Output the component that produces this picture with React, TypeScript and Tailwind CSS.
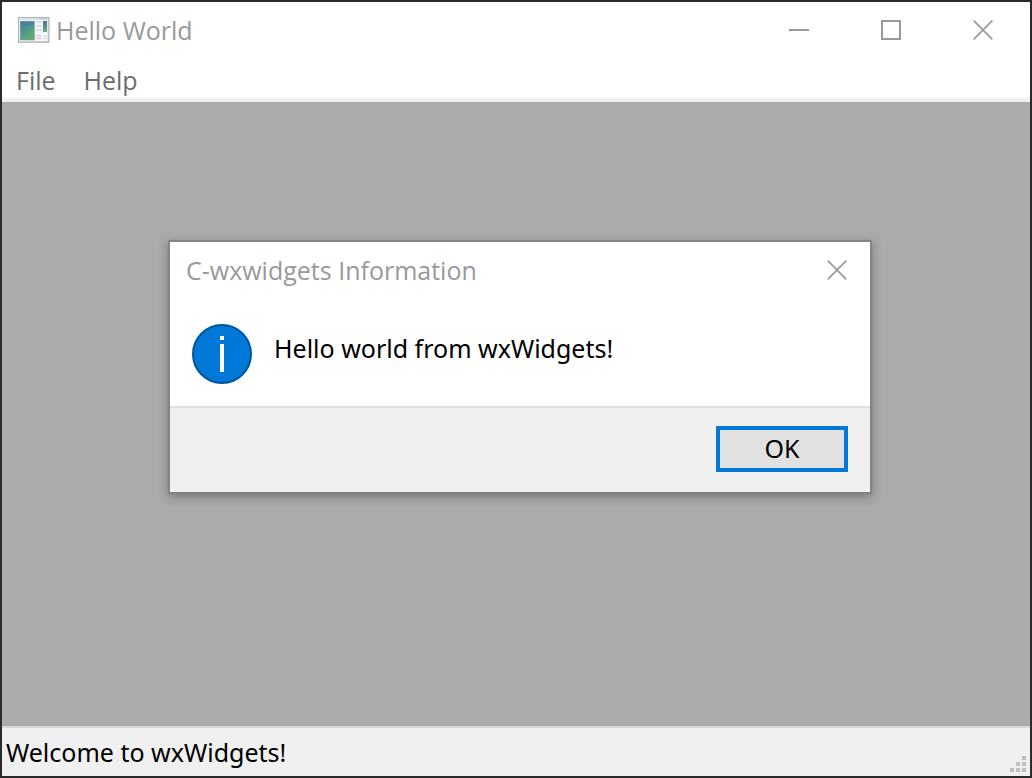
import { useState } from "react";

function AppIcon() {
  return (
    <svg width="32" height="26" viewBox="0 0 32 26" aria-hidden="true">
      <defs>
        <linearGradient id="pane" x1="0" y1="0" x2="0.5" y2="1">
          <stop offset="0" stopColor="#5480a8" />
          <stop offset="0.5" stopColor="#4b9590" />
          <stop offset="1" stopColor="#62ad72" />
        </linearGradient>
        <linearGradient id="frame" x1="0" y1="0" x2="1" y2="1">
          <stop offset="0" stopColor="#e6e7ea" />
          <stop offset="1" stopColor="#cdd0d4" />
        </linearGradient>
        <linearGradient id="strip" x1="0" y1="0" x2="0" y2="1">
          <stop offset="0" stopColor="#46709f" />
          <stop offset="1" stopColor="#66b578" />
        </linearGradient>
      </defs>
      <rect x="0.5" y="0.5" width="30.5" height="24.8" fill="url(#frame)" stroke="#adb0b6" />
      <path d="M21 2h8" stroke="#c3c6d6" />
      <rect x="1.5" y="3" width="28" height="21" fill="#f4f5f6" />
      <rect x="2.3" y="4.2" width="14" height="18.8" fill="url(#pane)" stroke="#75a0a4" strokeWidth="0.6" />
      <path d="M2.5 13C6 10 11 8 16 8V4.5H2.5Z" fill="#44759f" opacity="0.4" />
      <path d="M18 5h5.5M18 9h5.5M18 13h5.5M18 19h5.5M18 21.5h5.5" stroke="#d3d5d8" strokeWidth="1.6" />
      <rect x="25" y="4" width="4" height="11" fill="url(#strip)" />
      <path d="M25 19h4M25 21.5h4" stroke="#dddfe1" strokeWidth="1.6" />
    </svg>
  );
}

function CloseGlyph() {
  return (
    <svg width="20" height="20" viewBox="0 0 20 20" aria-hidden="true">
      <path d="M0.7 0.7L19.3 19.3M19.3 0.7L0.7 19.3" stroke="#999999" strokeWidth="1.7" />
    </svg>
  );
}

function InfoIcon() {
  return (
    <svg width="60" height="60" viewBox="0 0 60 60" aria-hidden="true" className="shrink-0">
      <circle cx="30" cy="30" r="29" fill="#0078d7" stroke="#00559b" strokeWidth="2" />
      <rect x="28" y="12" width="4" height="4" fill="#fff" />
      <rect x="28" y="20" width="4" height="28" fill="#fff" />
    </svg>
  );
}

function SizeGrip() {
  return (
    <svg width="16" height="16" viewBox="0 0 16 16" fill="#bfbfbf" aria-hidden="true">
      <path d="M12 0h4v4h-4zM6 6h4v4H6zM12 6h4v4h-4zM0 12h4v4H0zM6 12h4v4H6zM12 12h4v4h-4z" />
    </svg>
  );
}

function MessageDialog({ onClose }: { onClose: () => void }) {
  return (
    <section
      role="dialog"
      aria-labelledby="dialog-title"
      className="w-[704px] border-2 border-[#848484] bg-white shadow-[0_3px_10px_rgba(0,0,0,0.3)]"
    >
      <header className="flex h-[60px] items-start justify-between pl-4">
        <h2 id="dialog-title" className="font-['Open_Sans',sans-serif] leading-14 text-[#999999]">
          C-wxwidgets Information
        </h2>
        <button
          type="button"
          aria-label="Close"
          onClick={onClose}
          className="flex h-14 w-[66px] items-center justify-center"
        >
          <CloseGlyph />
        </button>
      </header>
      <div className="flex h-[104px] gap-[22px] px-[22px] pt-[22px]">
        <InfoIcon />
        <p className="pt-1.5 leading-9 text-black">Hello world from wxWidgets!</p>
      </div>
      <footer className="flex justify-end border-t-2 border-[#dfdfdf] bg-[#f0f0f0] px-[22px] pt-[18px] pb-5">
        <button
          type="button"
          onClick={onClose}
          className="flex h-[46px] w-[132px] items-center justify-center border-4 border-[#0078d7] bg-[#e1e1e1] text-black"
        >
          OK
        </button>
      </footer>
    </section>
  );
}

export default function App() {
  const [open, setOpen] = useState(true);

  return (
    <div className="flex min-h-screen flex-col border-2 border-[#2b2b2b] bg-white font-['Noto_Sans',sans-serif] text-[25px]">
      <header className="flex h-[58px] items-start justify-between pr-px pl-4">
        <div className="flex items-center gap-1.5">
          <AppIcon />
          <h1 className="font-['Open_Sans',sans-serif] leading-14 text-[#999999]">Hello World</h1>
        </div>
        <div className="flex">
          <button type="button" aria-label="Minimize" className="flex h-14 w-[92px] items-center justify-center">
            <svg width="20" height="20" viewBox="0 0 20 20" aria-hidden="true">
              <path d="M0 10h20" stroke="#999999" strokeWidth="2" />
            </svg>
          </button>
          <button type="button" aria-label="Maximize" className="flex h-14 w-[92px] items-center justify-center">
            <svg width="20" height="20" viewBox="0 0 20 20" aria-hidden="true">
              <rect x="1" y="1" width="18" height="18" fill="none" stroke="#999999" strokeWidth="2" />
            </svg>
          </button>
          <button type="button" aria-label="Close window" className="flex h-14 w-[92px] items-center justify-center">
            <CloseGlyph />
          </button>
        </div>
      </header>
      <nav className="flex h-[42px] items-end gap-7 border-b-4 border-[#f0f0f0] pl-3.5 font-['Open_Sans',sans-serif] text-[#6d6d6d]">
        <button type="button" className="leading-9">File</button>
        <button type="button" className="leading-9">Help</button>
      </nav>
      <main className="flex grow flex-col items-center bg-[#ababab] pt-[138px] pl-2">
        {open && <MessageDialog onClose={() => setOpen(false)} />}
      </main>
      <footer className="flex h-[50px] items-end justify-between border-t-2 border-[#d7d7d7] bg-[#f0f0f0] pr-1 pb-1 pl-1">
        <p className="leading-10 text-black">Welcome to wxWidgets!</p>
        <SizeGrip />
      </footer>
    </div>
  );
}
